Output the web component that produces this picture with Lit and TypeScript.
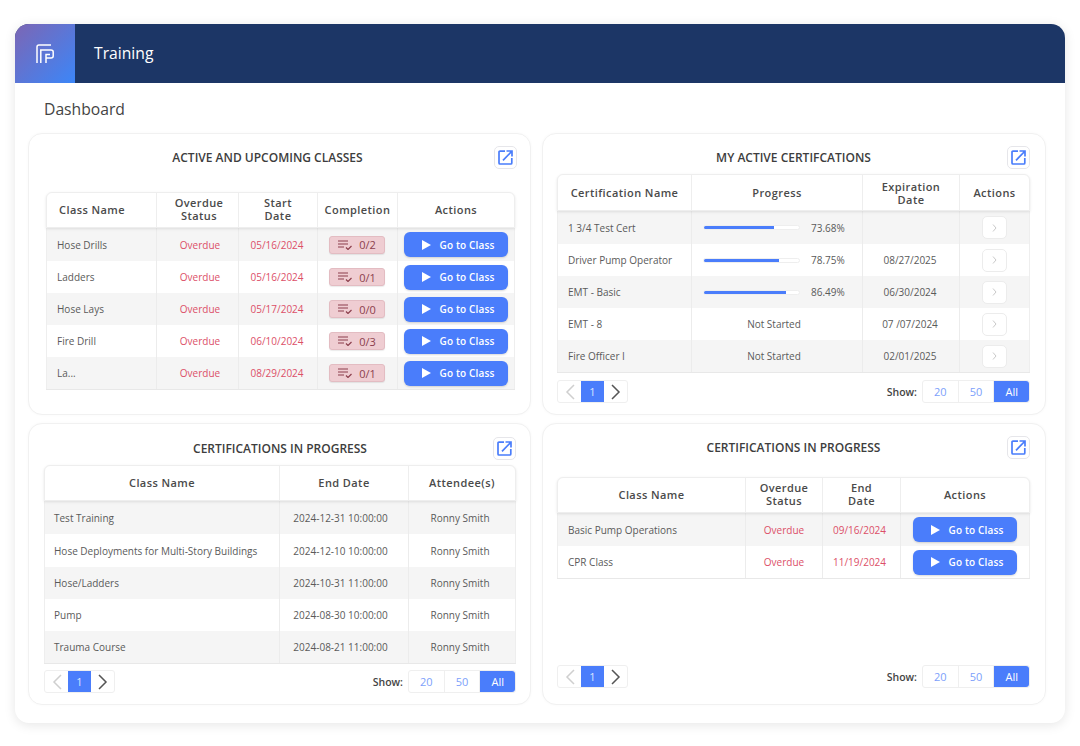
import { LitElement, html, css } from "lit";
import { customElement } from "lit/decorators.js";

const extIcon = html`<svg viewBox="0 0 15 15" width="15" height="15" fill="none" stroke="#4a7dfb" stroke-width="1.700"><path d="M7 1.200H2q-1 0-1 1V13q0 1 1 1h10.800q1 0 1-1V8"/><path d="M5 10.300 13.600 1.500M8.500 1h5.500v5.500"/></svg>`;
const logo = html`<svg viewBox="0 0 18 19" width="18" height="19" fill="none" stroke="#fff" stroke-width="1.500"><path d="M1 19V3q0-2 2-2H15"/><path d="M4.800 19V6H15q2.200 0 2.200 2v4q0 2-2.200 2H10"/><path d="M10 19v-8.500h4"/></svg>`;
const play = html`<svg viewBox="0 0 9 10" width="9" height="10"><path d="M0 0l9 5-9 5z" fill="#fff"/></svg>`;
const listCheck = html`<svg viewBox="0 0 14 10" width="14" height="10" fill="none" stroke="#8c3f4d" stroke-width="1.200"><path d="M0 1h10M0 4h10M0 7h6"/><path d="M8 7.500l2 2 3.500-3.500"/></svg>`;
const chev = (c: string, left = false) => html`<svg viewBox="0 0 10 16" width="10" height="16" fill="none" stroke=${c} stroke-width="1.500"><path d=${left ? "M9 1 2 8l7 7" : "M1 1l7 7-7 7"}/></svg>`;
const smallChev = html`<svg viewBox="0 0 5 8" width="5" height="8" fill="none" stroke="#c9c9c9" stroke-width="1"><path d="M1 .5 4 4 1 7.500"/></svg>`;

const goBtn = html`<button class="go">${play}<span>Go to Class</span></button>`;
const pager = html`<div class="pager">
  <div class="pages"><span class="pg">${chev("#cfcfcf", true)}</span><span class="pg cur">1</span><span class="pg">${chev("#555")}</span></div>
  <div class="show"><b>Show:</b><div class="sizes"><span>20</span><span>50</span><span class="cur">All</span></div></div>
</div>`;

const bar = (p: number) => html`<div class="prog"><div class="track"><div class="fill" style="width:${p}%"></div></div><span>${p}%</span></div>`;

@customElement("app-root")
export class AppRoot extends LitElement {
  static styles = css`
    :host { display: block; width: 1080px; height: 746px; background: #fff; font-family: "Open Sans", sans-serif; color: #555; box-sizing: border-box; padding: 24px 15px 23px; overflow: hidden; }
    * { box-sizing: border-box; }
    .shell { height: 699px; background: #fff; border-radius: 14px; box-shadow: 0 2px 12px rgba(0,0,0,.1); overflow: hidden; display: flex; flex-direction: column; }
    header { height: 59px; flex: none; background: #1c3666; display: flex; align-items: center; color: #fff; font-size: 15.700px; }
    header span { margin-top: -2px; }
    .logo { width: 60px; height: 59px; background: linear-gradient(135deg, #7c66b4, #3c86f8); display: flex; align-items: center; justify-content: center; margin-right: 19px; }
    h1 { margin: 0; padding: 15px 0 0 29px; height: 50px; font-size: 15.700px; line-height: 22px; font-weight: 500; color: #444; }
    .grid { display: grid; grid-template-columns: 503px 504px; column-gap: 11px; padding-left: 13px; }
    .col { display: flex; flex-direction: column; gap: 8px; }
    .card { height: 282px; border: 1px solid #f1f1f1; border-radius: 14px; display: flex; flex-direction: column; box-shadow: 0 0 3px rgba(0,0,0,.03); background: #fff; }
    .c1 { padding: 12px 15px 0 17px; }
    .c2 { padding: 12px 15px 11px 14px; }
    .c3 { padding: 13px 14px 11px 15px; }
    .c4 { padding: 12px 15px 16px 14px; }
    .title { display: grid; grid-template-columns: 1fr auto 1fr; align-items: center; height: 23px; font-size: 12px; font-weight: 600; color: #3d3d3d; }
    .title h2 { grid-column: 2; font: inherit; margin: 0; white-space: nowrap; }
    .c1 .title h2 { margin-right: 26px; }
    .ext { grid-column: 3; justify-self: end; width: 23px; height: 23px; border: 1px solid #e6e6ea; border-radius: 5px; display: flex; align-items: center; justify-content: center; background: #fff; }
    .c1 .ext { margin-right: -2px; }
    .c1 .table { margin-top: 23px; }
    .c2 .table { margin-top: 5px; }
    .c3 .table { margin-top: 5px; }
    .c4 .table { margin-top: 18px; }
    .table { font-size: 10px; border-bottom: 1px solid #e8e8e8; }
    .row, .head { display: grid; }
    .c1 .row, .c1 .head { grid-template-columns: 110px 82px 79px 80px 116px; }
    .c2 .row, .c2 .head { grid-template-columns: 134px 171px 97px 69px; }
    .c3 .row, .c3 .head { grid-template-columns: 235px 129px 106px; }
    .c4 .row, .c4 .head { grid-template-columns: 188px 77px 78px 128px; }
    .head { height: 36px; border: 1px solid #eee; border-radius: 6px 6px 0 0; box-shadow: 0 1px 3px rgba(0,0,0,.1); position: relative; background: #fff; font-size: 11px; font-weight: 600; letter-spacing: .42px; color: #4a4a4a; line-height: 13px; }
    .c2 .head { height: 37px; }
    .head > div { display: flex; align-items: center; justify-content: center; text-align: center; border-right: 1px solid #eee; padding: 0 2px 2px; }
    .c2 .head > div { padding-bottom: 0; }
    .head > div:last-child { border-right: 0; }
    .row { height: 32px; border-left: 1px solid #eee; border-right: 1px solid #eee; }
    .row:nth-child(2) { height: 33px; }
    .c3 .row:nth-child(3) { height: 33px; }
    .row:nth-child(even) { background: #f5f5f5; }
    .row > div { display: flex; align-items: center; justify-content: center; border-right: 1px solid #ececec; white-space: nowrap; color: #5a5a5a; }
    .row > div:last-child { border-right: 0; }
    .row > div:first-child { justify-content: flex-start; padding-left: 10px; }
    .head > div.left { justify-content: flex-start; padding-left: 12px; }
    .c3 .row > div:first-child { padding-left: 9px; }
    .c3 .row > div:nth-child(2) { padding-right: 7px; }
    .c3 .row > div:nth-child(3) { padding-right: 4px; }
    .c1 .row > div:nth-child(2), .c1 .head > div:nth-child(2) { padding-left: 5px; }
    .c1 .row > div:nth-child(3), .c2 .row > div:nth-child(3) { padding-right: 2px; }
    .c4 .row > div:nth-child(3) { padding-right: 4px; }
    .red { color: #dc4f68 !important; }
    .badge { width: 56px; height: 18px; margin-left: -1px; background: #efcdd2; border: 1px solid #e3bcc2; border-radius: 3px; display: flex; align-items: center; justify-content: center; gap: 7px; color: #8c3f4d; font-size: 11px; box-shadow: 0 1px 1px rgba(0,0,0,.08); }
    .go { width: 104px; height: 25px; border: 0; border-radius: 6px; background: #4a7dfb; color: #fff; font: 600 10px "Open Sans", sans-serif; letter-spacing: .15px; display: flex; align-items: center; justify-content: center; gap: 9px; padding: 0 0 0 4px; box-shadow: 0 1px 2px rgba(0,0,0,.15); }
    .arrow { width: 25px; height: 23px; border: 1px solid #ececec; border-radius: 5px; background: #fff; display: flex; align-items: center; justify-content: center; }
    .prog { display: flex; align-items: center; gap: 11px; width: 100%; padding-left: 11px; }
    .ns { margin-right: 6px; }
    .track { width: 97px; height: 5px; background: #fff; border: 1px solid #eee; border-radius: 3px; overflow: hidden; flex: none; }
    .fill { background: #4a7dfb; margin-top: -1px; height: 5px; }
    .pager { display: flex; justify-content: space-between; align-items: center; margin-top: 7px; height: 23px; }
    .c3 .pager { margin-top: 6px; }
    .c4 .pager { margin-top: auto; }
    .pages { display: flex; border: 1px solid #efefef; border-radius: 3px; height: 23px; }
    .pg { width: 23px; display: flex; align-items: center; justify-content: center; font-size: 11px; }
    .pg.cur { background: #4a7dfb; color: #d8e4ff; }
    .show { display: flex; align-items: center; gap: 5px; font-size: 10.500px; }
    .show b { font-weight: 600; color: #444; }
    .sizes { display: flex; border: 1px solid #efefef; border-radius: 3px; height: 23px; width: 108px; font-size: 11px; }
    .sizes span { flex: 1; display: flex; align-items: center; justify-content: center; color: #7d9ffb; border-right: 1px solid #efefef; }
    .sizes span.cur { background: #4a7dfb; color: #fff; border-right: 0; border-radius: 0 3px 3px 0; }
  `;

  render() {
    const c1 = [["Hose Drills","05/16/2024","0/2"],["Ladders","05/16/2024","0/1"],["Hose Lays","05/17/2024","0/0"],["Fire Drill","06/10/2024","0/3"],["La...","08/29/2024","0/1"]];
    const c2: [string, number | null, string][] = [["1 3/4 Test Cert",73.68,""],["Driver Pump Operator",78.75,"08/27/2025"],["EMT - Basic",86.49,"06/30/2024"],["EMT - 8",null,"07 /07/2024"],["Fire Officer I",null,"02/01/2025"]];
    const c3 = [["Test Training","2024-12-31 10:00:00"],["Hose Deployments for Multi-Story Buildings","2024-12-10 10:00:00"],["Hose/Ladders","2024-10-31 11:00:00"],["Pump","2024-08-30 10:00:00"],["Trauma Course","2024-08-21 11:00:00"]];
    const c4 = [["Basic Pump Operations","09/16/2024"],["CPR Class","11/19/2024"]];
    return html`<div class="shell">
      <header><div class="logo">${logo}</div><span>Training</span></header>
      <h1>Dashboard</h1>
      <div class="grid">
        <div class="col">
          <section class="card c1">
            <div class="title"><h2>ACTIVE AND UPCOMING CLASSES</h2><div class="ext">${extIcon}</div></div>
            <div class="table">
              <div class="head"><div class="left">Class Name</div><div>Overdue<br />Status</div><div>Start<br />Date</div><div>Completion</div><div>Actions</div></div>
              ${c1.map(r => html`<div class="row"><div>${r[0]}</div><div class="red">Overdue</div><div class="red">${r[1]}</div><div><span class="badge">${listCheck}${r[2]}</span></div><div>${goBtn}</div></div>`)}
            </div>
          </section>
          <section class="card c3">
            <div class="title"><h2>CERTIFICATIONS IN PROGRESS</h2><div class="ext">${extIcon}</div></div>
            <div class="table">
              <div class="head"><div>Class Name</div><div>End Date</div><div>Attendee(s)</div></div>
              ${c3.map(r => html`<div class="row"><div>${r[0]}</div><div>${r[1]}</div><div>Ronny Smith</div></div>`)}
            </div>
            ${pager}
          </section>
        </div>
        <div class="col">
          <section class="card c2">
            <div class="title"><h2>MY ACTIVE CERTIFCATIONS</h2><div class="ext">${extIcon}</div></div>
            <div class="table">
              <div class="head"><div>Certification Name</div><div>Progress</div><div>Expiration<br />Date</div><div>Actions</div></div>
              ${c2.map(r => html`<div class="row"><div>${r[0]}</div><div>${r[1] === null ? html`<span class="ns">Not Started</span>` : bar(r[1])}</div><div>${r[2]}</div><div><span class="arrow">${smallChev}</span></div></div>`)}
            </div>
            ${pager}
          </section>
          <section class="card c4">
            <div class="title"><h2>CERTIFICATIONS IN PROGRESS</h2><div class="ext">${extIcon}</div></div>
            <div class="table">
              <div class="head"><div>Class Name</div><div>Overdue<br />Status</div><div>End<br />Date</div><div>Actions</div></div>
              ${c4.map(r => html`<div class="row"><div>${r[0]}</div><div class="red">Overdue</div><div class="red">${r[1]}</div><div>${goBtn}</div></div>`)}
            </div>
            ${pager}
          </section>
        </div>
      </div>
    </div>`;
  }
}
